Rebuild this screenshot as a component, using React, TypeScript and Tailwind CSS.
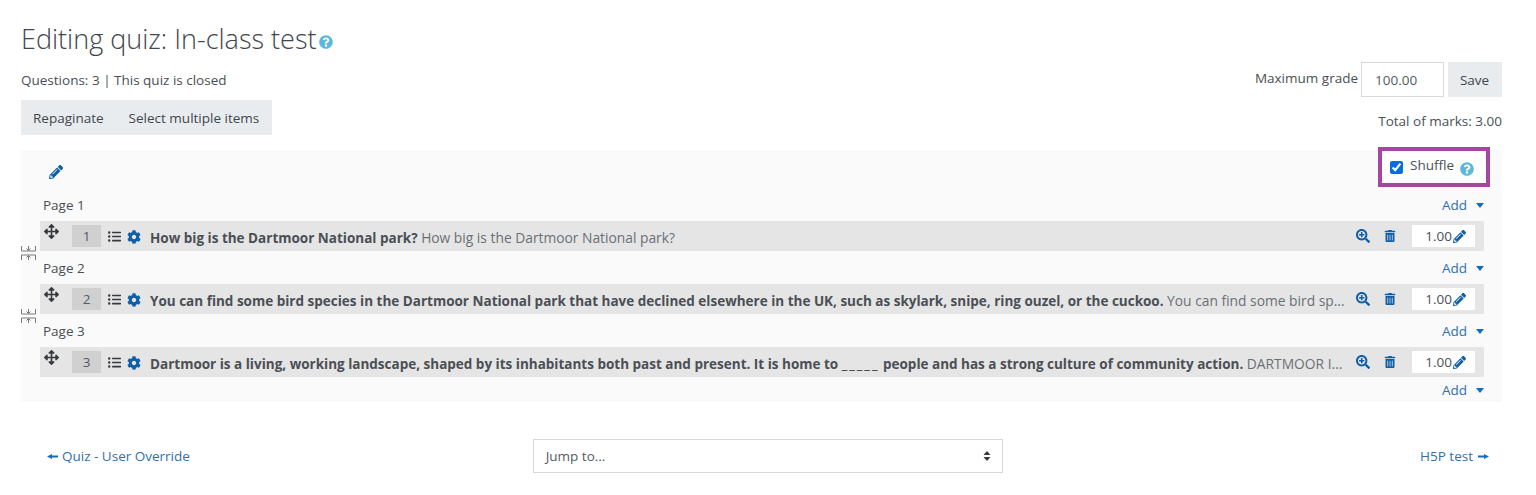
import { FaArrowsAlt, FaCog, FaListUl, FaPencilAlt, FaQuestionCircle, FaSearchPlus, FaTrashAlt } from "react-icons/fa";

const questions = [
   {
      page: "Page 1",
      num: 1,
      bold: <>How big is the Dartmoor National park?</>,
      rest: "How big is the Dartmoor National park?",
   },
   {
      page: "Page 2",
      num: 2,
      bold: <>You can find some bird species in the Dartmoor National park that have declined elsewhere in the UK, such as skylark, snipe, ring ouzel, or the cuckoo.</>,
      rest: "You can find some bird sp...",
   },
   {
      page: "Page 3",
      num: 3,
      bold: (
         <>
            Dartmoor is a living, working landscape, shaped by its inhabitants both past and present. It is home to <span className="tracking-[2px]">_____</span> people and has a strong culture of community action.
         </>
      ),
      rest: "DARTMOOR I...",
   },
];

const AddMenu = () => (
   <div className="flex items-center justify-end gap-[9px] text-[#2f6fb0]">
      <span>Add</span>
      <span className="w-0 h-0 border-x-[4.5px] border-x-transparent border-t-[5px] border-t-[#0f6cbf]" />
   </div>
);

const SplitIcon = () => (
   <svg width="15" height="14" viewBox="0 0 15 14" fill="none" stroke="#7a7a7a" strokeWidth="1">
      <path d="M.5 0v5h14V0M.5 14V9h14v5" />
      <path d="M7.5 0v4M5.5 2.5l2 2 2-2M7.5 14v-4M5.5 11.5l2-2 2 2" />
   </svg>
);

export default function App() {
   return (
      <div className="w-[1536px] h-[495px] overflow-hidden bg-white pl-[21px] pr-[34px] pt-[21px] text-[13.5px] leading-[20px] text-[#4a4f55] font-['Open_Sans',sans-serif]">
         <h2 className="flex items-center text-[27px] leading-[36px] font-light text-[#3f464d]">
            Editing quiz: In-class test
            <FaQuestionCircle size={14} color="#5bb7dc" className="ml-[2px] mt-[5px]" />
         </h2>

         <div className="flex justify-between items-start mt-[5px] h-[38px]">
            <div className="mt-[8px]">Questions: 3 | This quiz is closed</div>
            <div className="flex items-start">
               <span className="mt-[6px] mr-[3px]">Maximum grade</span>
               <div className="w-[83px] h-[35px] mr-[4px] pl-[13px] pt-[1px] flex items-center border border-[#d5dae0] text-[#555b62]">100.00</div>
               <button className="w-[54px] h-[35px] pt-[1px] pr-[1px] bg-[#e9ecef] text-[#3f464d]">Save</button>
            </div>
         </div>

         <div className="flex justify-between items-start h-[50px]">
            <div className="flex h-[35px] items-center bg-[#e9ecef] pl-3 pr-[13px] gap-[25px] text-[#3f464d]">
               <span>Repaginate</span>
               <span>Select multiple items</span>
            </div>
            <div className="mt-[11px]">Total of marks: 3.00</div>
         </div>

         <div className="relative bg-[#fafafa] h-[252px] pl-[19px] pr-[18px] pt-[14px]">
            <FaPencilAlt size={14} color="#0f5fa8" className="ml-[9px] mt-[1px]" />
            <div className="absolute right-[12px] top-[-3px] w-[112px] h-[40px] border-[4px] border-[#a347a0] bg-white flex items-center pl-[8px] text-[#4a4f55]">
               <input type="checkbox" defaultChecked className="w-[13px] h-[13px] accent-[#0b6be0]" />
               <span className="ml-[7px] -mt-[4px]">Shuffle</span>
               <FaQuestionCircle size={14} color="#5bb7dc" className="ml-[6px] mt-[3px]" />
            </div>

            <div className="mt-[14px]">
               {questions.map((q) => (
                  <div key={q.num} className="relative h-[63px]">
                     <div className="flex justify-between items-center h-[24px] mb-[4px]">
                        <span className="ml-[3px]">{q.page}</span>
                        <AddMenu />
                     </div>
                     <div className="flex items-center h-[30px] bg-[#e5e5e5]">
                        <FaArrowsAlt size={15} color="#343a40" className="ml-[4px] mr-[13px] -mt-[9px] shrink-0" />
                        <span className="w-[29px] h-[22px] bg-[#d0d0d0] flex items-center justify-center text-[#555b62] shrink-0">{q.num}</span>
                        <FaListUl size={13} color="#343a40" className="ml-[7px] shrink-0" />
                        <FaCog size={14} color="#0f5fa8" className="ml-[6px] mr-[9px] mt-[1px] shrink-0" />
                        <div className="flex-1 min-w-0 whitespace-nowrap mt-[3px]">
                           <b className="font-bold">{q.bold}</b> <span className="text-[#6a7076] text-[13.8px]">{q.rest}</span>
                        </div>
                        <FaSearchPlus size={14} color="#0f5fa8" className="ml-[10px] shrink-0" />
                        <FaTrashAlt size={12} color="#0f5fa8" className="ml-[14px] shrink-0" />
                        <div className="ml-[16px] mr-[9px] w-[63px] h-[22px] bg-white flex items-center justify-end pr-[9px] gap-[1px] shrink-0">
                           <span>1.00</span>
                           <FaPencilAlt size={13} color="#0f5fa8" />
                        </div>
                     </div>
                     {q.num < 3 && (
                        <div className="absolute left-[-19px] top-[53px]">
                           <SplitIcon />
                        </div>
                     )}
                  </div>
               ))}
               <div className="-mt-[2px]">
                  <AddMenu />
               </div>
            </div>
         </div>

         <div className="grid grid-cols-3 items-center mt-[37px] h-[34px] px-[26px] pr-[13px]">
            <div className="flex items-center gap-[4px] text-[#2f6fb0]">
               <svg width="11" height="7" viewBox="0 0 11 7"><path d="M0 3.5 5 1v1.5h6v2H5V6Z" fill="#0f6cbf" /></svg>
               <span>Quiz - User Override</span>
            </div>
            <div className="flex items-center justify-between w-[470px] h-[34px] ml-[5px] border border-[#d5dae0] pl-3 pr-[11px] text-[#555b62]">
               <span>Jump to...</span>
               <svg width="8" height="12" viewBox="0 0 8 12"><path d="M4 1 7.5 5h-7ZM4 11 .5 7h7Z" fill="#343a40" /></svg>
            </div>
            <div className="flex items-center justify-end gap-[5px] text-[#2f6fb0]">
               <span>H5P test</span>
               <svg width="11" height="7" viewBox="0 0 11 7"><path d="M11 3.5 6 1v1.5H0v2h6V6Z" fill="#0f6cbf" /></svg>
            </div>
         </div>
      </div>
   );
}
